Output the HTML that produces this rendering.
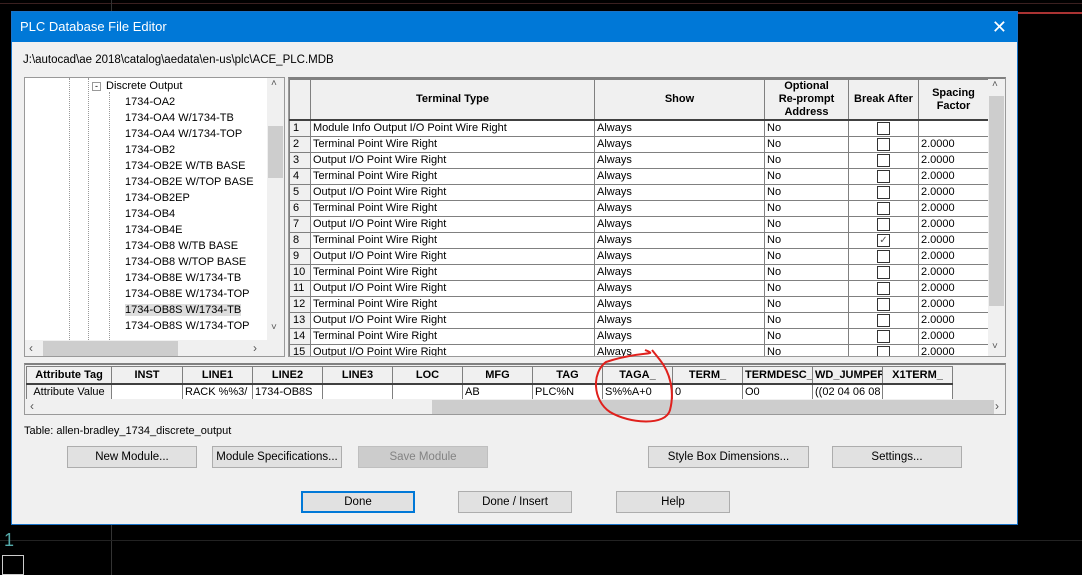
<!DOCTYPE html>
<html><head><meta charset="utf-8"><style>
*{margin:0;padding:0;box-sizing:border-box}
body{width:1082px;height:575px;background:#000;position:relative;overflow:hidden;font-family:"Liberation Sans",Arial,sans-serif;font-size:12px;color:#000}
.a{position:absolute}
#dlg{left:11px;top:11px;width:1007px;height:514px;background:#f0f0f0;border:1px solid #1a73c8}
#title{left:0;top:0;width:1005px;height:30px;background:#0078d7;color:#fff;font-size:13px;line-height:30px;padding-left:8px}
table{border-collapse:collapse;table-layout:fixed}
#g td{border:1px solid #808080;height:16px;padding:0 2px;font-size:11px;line-height:14px;overflow:hidden;white-space:nowrap;background:#fff}
#g td.n{background:#f0f0f0;text-align:left;padding-left:3px}
#g th{border:1px solid #808080;border-bottom:2px solid #404040;background:#f0f0f0;font-size:11px;font-weight:bold;height:40px;line-height:13px}
.cb{display:inline-block;width:13px;height:13px;border:1px solid #333;background:#fff;vertical-align:middle}
#at td{border:1px solid #808080;height:17px;padding:0 2px;font-size:11px;white-space:nowrap;overflow:hidden;background:#fff}
#at tr:first-child td{background:#f0f0f0;font-weight:bold;text-align:center;border-bottom:2px solid #404040}
.btn{position:absolute;height:22px;background:#e1e1e1;border:1px solid #adadad;text-align:center;line-height:20px;font-size:11.5px}
.tree div{height:16px;line-height:16px;font-size:11px;white-space:nowrap}
</style></head><body>
<div class="a" style="left:0;top:3px;width:1082px;height:1px;background:#3a2020"></div>
<div class="a" style="left:111px;top:0;width:1px;height:575px;background:#333"></div>
<div class="a" style="left:0;top:540px;width:1082px;height:1px;background:#222"></div>
<div class="a" style="left:1018px;top:12px;width:64px;height:2px;background:#a33"></div>
<div class="a" style="left:4px;top:530px;color:#5aa;font-size:18px">1</div>
<div class="a" style="left:2px;top:555px;width:22px;height:20px;border:1px solid #ccc"></div>

<div id="dlg" class="a">
<div id="title" class="a">PLC Database File Editor<span style="position:absolute;right:10px;top:0;font-size:18px">✕</span></div>
<div class="a" style="left:11px;top:42px;font-size:11.5px">J:\autocad\ae 2018\catalog\aedata\en-us\plc\ACE_PLC.MDB</div>

<div class="a" style="left:12px;top:65px;width:261px;height:280px;background:#fff;border:1px solid #999;overflow:hidden">
 <div class="a" style="left:44px;top:0;height:262px;border-left:1px dotted #999"></div>
 <div class="a" style="left:63px;top:0;height:262px;border-left:1px dotted #999"></div>
 <div class="a" style="left:84px;top:14px;height:250px;border-left:1px dotted #999"></div>
 <div class="a" style="left:67px;top:4px;width:9px;height:9px;border:1px solid #999;font-size:9px;line-height:7px;text-align:center">-</div>
 <div class="a tree" style="left:81px;top:0"><div>Discrete Output</div></div>
 <div class="a tree" style="left:100px;top:16px">
  <div>1734-OA2</div><div>1734-OA4 W/1734-TB</div><div>1734-OA4 W/1734-TOP</div><div>1734-OB2</div><div>1734-OB2E W/TB BASE</div><div>1734-OB2E W/TOP BASE</div><div>1734-OB2EP</div><div>1734-OB4</div><div>1734-OB4E</div><div>1734-OB8 W/TB BASE</div><div>1734-OB8 W/TOP BASE</div><div>1734-OB8E W/1734-TB</div><div>1734-OB8E W/1734-TOP</div><div><span style="background:#ddd">1734-OB8S W/1734-TB</span></div><div>1734-OB8S W/1734-TOP</div>
 </div>
 <div class="a" style="left:242px;top:0;width:17px;height:262px;background:#f0f0f0"><div class="a" style="left:1px;top:48px;width:15px;height:52px;background:#cdcdcd"></div><div class="a" style="left:4px;top:0;font-size:10px;color:#555">˄</div><div class="a" style="left:4px;top:244px;font-size:10px;color:#555">˅</div></div>
 <div class="a" style="left:0;top:262px;width:259px;height:17px;background:#f0f0f0"><div class="a" style="left:18px;top:1px;width:135px;height:15px;background:#cdcdcd"></div><div class="a" style="left:4px;top:1px;color:#555">‹</div><div class="a" style="left:228px;top:1px;color:#555">›</div></div>
</div>

<div class="a" style="left:276px;top:65px;width:718px;height:280px;background:#fff;border:1px solid #999;border-top:2px solid #808080;overflow:hidden">
<table id="g" class="a" style="left:0;top:0;width:699px">
<colgroup><col style="width:21px"><col style="width:284px"><col style="width:170px"><col style="width:84px"><col style="width:70px"><col style="width:70px"></colgroup>
<tr><th></th><th>Terminal Type</th><th>Show</th><th>Optional<br>Re-prompt<br>Address</th><th>Break After</th><th>Spacing<br>Factor</th></tr>
<tr><td class="n">1</td><td>Module Info Output I/O Point Wire Right</td><td>Always</td><td>No</td><td style="text-align:center"><span class="cb"></span></td><td></td></tr>
<tr><td class="n">2</td><td>Terminal Point Wire Right</td><td>Always</td><td>No</td><td style="text-align:center"><span class="cb"></span></td><td>2.0000</td></tr>
<tr><td class="n">3</td><td>Output I/O Point Wire Right</td><td>Always</td><td>No</td><td style="text-align:center"><span class="cb"></span></td><td>2.0000</td></tr>
<tr><td class="n">4</td><td>Terminal Point Wire Right</td><td>Always</td><td>No</td><td style="text-align:center"><span class="cb"></span></td><td>2.0000</td></tr>
<tr><td class="n">5</td><td>Output I/O Point Wire Right</td><td>Always</td><td>No</td><td style="text-align:center"><span class="cb"></span></td><td>2.0000</td></tr>
<tr><td class="n">6</td><td>Terminal Point Wire Right</td><td>Always</td><td>No</td><td style="text-align:center"><span class="cb"></span></td><td>2.0000</td></tr>
<tr><td class="n">7</td><td>Output I/O Point Wire Right</td><td>Always</td><td>No</td><td style="text-align:center"><span class="cb"></span></td><td>2.0000</td></tr>
<tr><td class="n">8</td><td>Terminal Point Wire Right</td><td>Always</td><td>No</td><td style="text-align:center"><span class="cb" style="font-size:10px;line-height:11px;color:#555">✓</span></td><td>2.0000</td></tr>
<tr><td class="n">9</td><td>Output I/O Point Wire Right</td><td>Always</td><td>No</td><td style="text-align:center"><span class="cb"></span></td><td>2.0000</td></tr>
<tr><td class="n">10</td><td>Terminal Point Wire Right</td><td>Always</td><td>No</td><td style="text-align:center"><span class="cb"></span></td><td>2.0000</td></tr>
<tr><td class="n">11</td><td>Output I/O Point Wire Right</td><td>Always</td><td>No</td><td style="text-align:center"><span class="cb"></span></td><td>2.0000</td></tr>
<tr><td class="n">12</td><td>Terminal Point Wire Right</td><td>Always</td><td>No</td><td style="text-align:center"><span class="cb"></span></td><td>2.0000</td></tr>
<tr><td class="n">13</td><td>Output I/O Point Wire Right</td><td>Always</td><td>No</td><td style="text-align:center"><span class="cb"></span></td><td>2.0000</td></tr>
<tr><td class="n">14</td><td>Terminal Point Wire Right</td><td>Always</td><td>No</td><td style="text-align:center"><span class="cb"></span></td><td>2.0000</td></tr>
<tr><td class="n">15</td><td>Output I/O Point Wire Right</td><td>Always</td><td>No</td><td style="text-align:center"><span class="cb"></span></td><td>2.0000</td></tr>
</table>
<div class="a" style="left:699px;top:0;width:17px;height:278px;background:#f0f0f0"><div class="a" style="left:1px;top:17px;width:15px;height:210px;background:#cdcdcd"></div><div class="a" style="left:4px;top:0;font-size:10px;color:#555">˄</div><div class="a" style="left:4px;top:262px;font-size:10px;color:#555">˅</div></div>
</div>

<div class="a" style="left:12px;top:351px;width:982px;height:52px;background:#f0f0f0;border:1px solid #999;border-top:2px solid #808080;overflow:hidden">
<table id="at" class="a" style="left:1px;top:1px;width:926px">
<colgroup><col style="width:85px"><col style="width:71px"><col style="width:70px"><col style="width:70px"><col style="width:70px"><col style="width:70px"><col style="width:70px"><col style="width:70px"><col style="width:70px"><col style="width:70px"><col style="width:70px"><col style="width:70px"><col style="width:70px"></colgroup>
<tr><td>Attribute Tag</td><td>INST</td><td>LINE1</td><td>LINE2</td><td>LINE3</td><td>LOC</td><td>MFG</td><td>TAG</td><td>TAGA_</td><td>TERM_</td><td>TERMDESC_</td><td>WD_JUMPER</td><td>X1TERM_</td></tr>
<tr><td style="background:#f0f0f0;text-align:center">Attribute Value</td><td></td><td>RACK %%3/</td><td>1734-OB8S</td><td></td><td></td><td>AB</td><td>PLC%N</td><td>S%%A+0</td><td>0</td><td>O0</td><td>((02 04 06 08</td><td></td></tr>
</table>
<div class="a" style="left:0;top:34px;width:980px;height:16px;background:#f0f0f0"><div class="a" style="left:407px;top:1px;width:562px;height:14px;background:#cdcdcd"></div><div class="a" style="left:5px;top:0;color:#555">‹</div><div class="a" style="left:970px;top:0;color:#555">›</div></div>
</div>

<div class="a" style="left:12px;top:413px;font-size:11px">Table: allen-bradley_1734_discrete_output</div>

<div class="btn" style="left:55px;top:434px;width:130px">New Module...</div>
<div class="btn" style="left:200px;top:434px;width:130px">Module Specifications...</div>
<div class="btn" style="left:346px;top:434px;width:130px;background:#ccc;border-color:#bfbfbf;color:#838383">Save Module</div>
<div class="btn" style="left:636px;top:434px;width:161px">Style Box Dimensions...</div>
<div class="btn" style="left:820px;top:434px;width:130px">Settings...</div>
<div class="btn" style="left:289px;top:479px;width:114px;border:2px solid #0078d7;line-height:18px">Done</div>
<div class="btn" style="left:446px;top:479px;width:114px">Done / Insert</div>
<div class="btn" style="left:604px;top:479px;width:114px">Help</div>
</div>

<svg class="a" style="left:0;top:0" width="1082" height="575">
<path d="M645 350 C660 356 642 350 606 362 C592 372 592 400 610 412 C630 424 666 426 670 410 C674 395 672 375 660 360 L652 350" fill="none" stroke="#e0201c" stroke-width="2"/>
</svg>
</body></html>
